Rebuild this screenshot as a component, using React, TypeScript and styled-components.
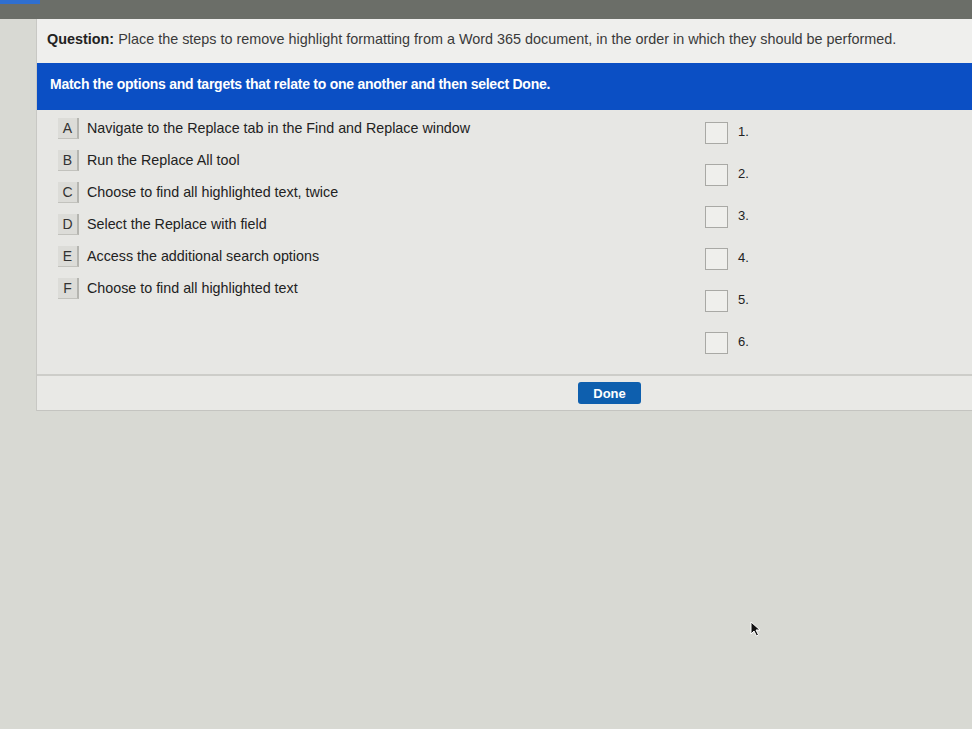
import React from 'react';
import styled, { createGlobalStyle } from 'styled-components';

const GlobalStyle = createGlobalStyle`
  html, body {
    margin: 0;
    padding: 0;
    background: #d8d9d3;
    font-family: 'Liberation Sans', Arial, sans-serif;
  }
`;

const options = [
  { key: 'A', text: 'Navigate to the Replace tab in the Find and Replace window' },
  { key: 'B', text: 'Run the Replace All tool' },
  { key: 'C', text: 'Choose to find all highlighted text, twice' },
  { key: 'D', text: 'Select the Replace with field' },
  { key: 'E', text: 'Access the additional search options' },
  { key: 'F', text: 'Choose to find all highlighted text' },
];

const targets = ['1.', '2.', '3.', '4.', '5.', '6.'];

const App = () => {
  return (
    <>
      <GlobalStyle />
      <Screen>
        <TopStrip>
          <TabMark />
        </TopStrip>
        <Page>
          <Panel>
            <QuestionRow>
              <b>Question:</b>&nbsp;Place the steps to remove highlight formatting from a Word 365
              document, in the order in which they should be performed.
            </QuestionRow>
            <Banner>
              Match the options and targets that relate to one another and then select&nbsp;
              <span>Done.</span>
            </Banner>
            <Body>
              <OptionList>
                {options.map(o => (
                  <OptionRow key={o.key}>
                    <LetterBox>{o.key}</LetterBox>
                    <span>{o.text}</span>
                  </OptionRow>
                ))}
              </OptionList>
              <TargetList>
                {targets.map(t => (
                  <TargetRow key={t}>
                    <DropBox />
                    <span>{t}</span>
                  </TargetRow>
                ))}
              </TargetList>
            </Body>
            <Footer>
              <DoneBtn type="button">Done</DoneBtn>
            </Footer>
          </Panel>
        </Page>
        <Cursor width="12" height="16" viewBox="0 0 12 16">
          <path d="M1 1 L1 13 L4 10 L6.5 15 L8.5 14 L6 9 L10 9 Z" fill="#111" stroke="#fff" strokeWidth="1" />
        </Cursor>
      </Screen>
    </>
  );
};

const Screen = styled.div`
  position: relative;
  width: 972px;
  height: 729px;
  overflow: hidden;
  background: #d8d9d3;
`;

const TopStrip = styled.div`
  height: 19px;
  background: #6b6e68;
  display: flex;
  align-items: flex-start;
`;

const TabMark = styled.div`
  width: 40px;
  height: 4px;
  background: #2f6fd0;
`;

const Page = styled.div`
  padding-left: 36px;
`;

const Panel = styled.div`
  background: #e7e7e4;
  border-left: 1px solid #c8c8c4;
  border-bottom: 1px solid #c4c4c0;
`;

const QuestionRow = styled.div`
  height: 40px;
  display: flex;
  align-items: center;
  padding: 0 0 4px 10px;
  background: #efefed;
  font-size: 14.4px;
  color: #3a3a3a;
  white-space: nowrap;
  b {
    color: #222;
  }
`;

const Banner = styled.div`
  height: 42px;
  display: flex;
  align-items: center;
  padding: 0 0 5px 13px;
  background: #0b4fc4;
  color: #fff;
  font-size: 14px;
  font-weight: 700;
  letter-spacing: -0.25px;
  white-space: nowrap;
`;

const Body = styled.div`
  display: flex;
  height: 262px;
  padding-top: 2px;
`;

const OptionList = styled.div`
  display: flex;
  flex-direction: column;
  padding-left: 21px;
  width: 620px;
`;

const OptionRow = styled.div`
  height: 32px;
  display: flex;
  align-items: center;
  gap: 8px;
  font-size: 14.3px;
  color: #222;
`;

const LetterBox = styled.span`
  width: 19px;
  height: 20px;
  display: flex;
  align-items: center;
  justify-content: center;
  background: #dcdcd8;
  border-right: 2px solid #b5b5b0;
  border-bottom: 1px solid #c2c2bd;
  font-size: 14px;
  color: #333;
`;

const TargetList = styled.div`
  display: flex;
  flex-direction: column;
  padding-top: 10px;
  padding-left: 27px;
`;

const TargetRow = styled.div`
  height: 42px;
  display: flex;
  align-items: flex-start;
  gap: 10px;
  font-size: 13px;
  color: #222;
  span {
    margin-top: 2px;
  }
`;

const DropBox = styled.div`
  width: 21px;
  height: 20px;
  background: #efefec;
  border: 1px solid #a9a9a5;
`;

const Footer = styled.div`
  height: 34px;
  border-top: 2px solid #cdcdc9;
  background: #e9e9e6;
  display: flex;
  align-items: center;
  padding-left: 541px;
`;

const DoneBtn = styled.button`
  width: 63px;
  height: 22px;
  border: none;
  border-radius: 3px;
  background: #0e5fae;
  color: #fff;
  font-family: 'Liberation Sans', Arial, sans-serif;
  font-size: 13px;
  font-weight: 700;
  cursor: pointer;
`;

const Cursor = styled.svg`
  position: absolute;
  left: 750px;
  top: 621px;
`;

export default App;
